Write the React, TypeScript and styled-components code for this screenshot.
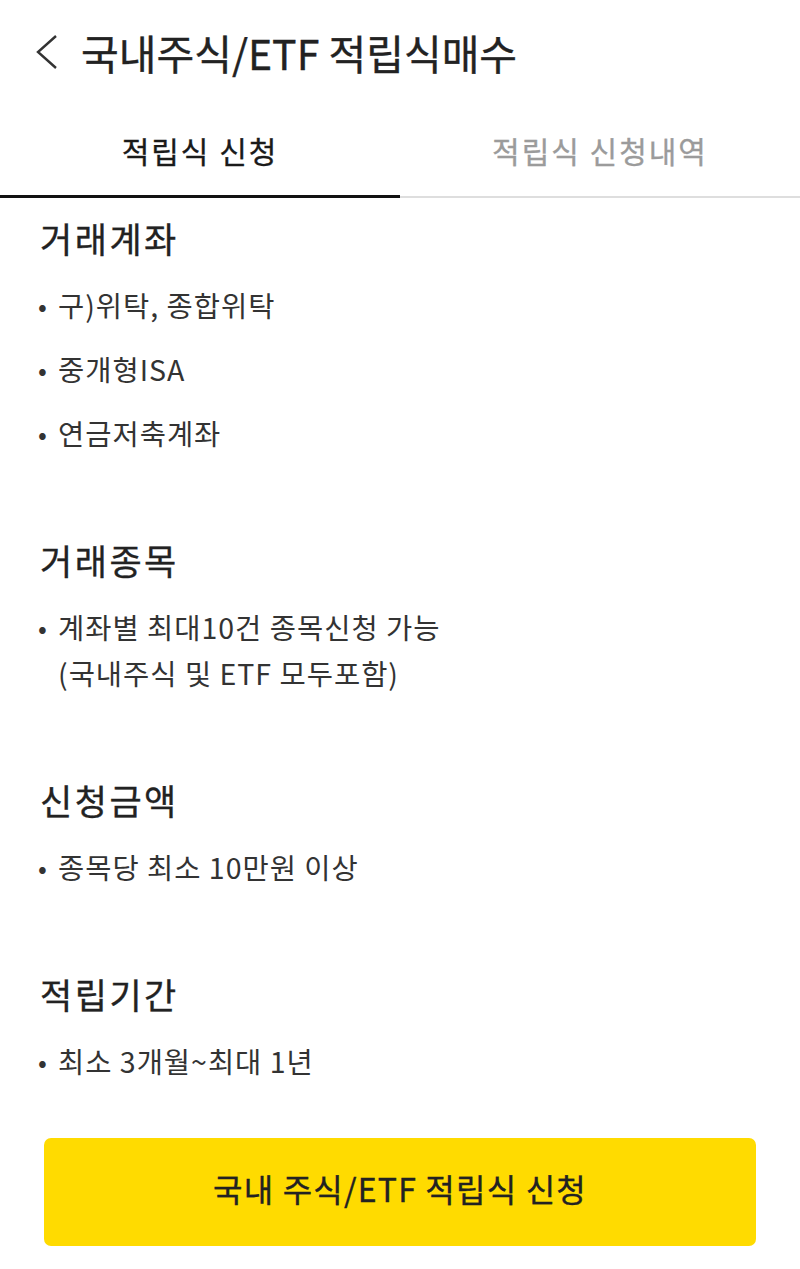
import styled, { createGlobalStyle } from "styled-components"
import { useState } from "react"

const GlobalStyle = createGlobalStyle`
  html, body {
    margin: 0;
    padding: 0;
    background: #fff;
  }
  body {
    font-family: "Noto Sans CJK KR", "Noto Sans", sans-serif;
    color: #222;
    -webkit-font-smoothing: antialiased;
  }
  * { box-sizing: border-box; }
`

const sections = [
  { title: "거래계좌", items: ["구)위탁, 종합위탁", "중개형ISA", "연금저축계좌"] },
  { title: "거래종목", items: ["계좌별 최대10건 종목신청 가능\n(국내주식 및 ETF 모두포함)"] },
  { title: "신청금액", items: ["종목당 최소 10만원 이상"] },
  { title: "적립기간", items: ["최소 3개월~최대 1년"] },
]

const tabs = ["적립식 신청", "적립식 신청내역"]

const App = () => {
  const [active, setActive] = useState(0)

  return (
    <Page>
      <GlobalStyle />
      <Header>
        <BackButton aria-label="back">
          <svg width="24" height="36" viewBox="0 0 24 36" fill="none">
            <polyline points="21,2 3,18 21,34" stroke="#333" strokeWidth="2.4" />
          </svg>
        </BackButton>
        <Title>국내주식/ETF 적립식매수</Title>
      </Header>

      <TabBar>
        {tabs.map((t, i) => (
          <Tab key={t} $active={i === active} onClick={() => setActive(i)}>
            {t}
          </Tab>
        ))}
      </TabBar>

      <Content>
        {sections.map((s) => (
          <Section key={s.title}>
            <SectionTitle>{s.title}</SectionTitle>
            <List>
              {s.items.map((item) => (
                <Item key={item}>
                  <Dot>•</Dot>
                  <ItemText>{item}</ItemText>
                </Item>
              ))}
            </List>
          </Section>
        ))}
      </Content>

      <Footer>
        <ApplyButton>국내 주식/ETF 적립식 신청</ApplyButton>
      </Footer>
    </Page>
  )
}

export default App

// medium weight: only regular/bold are installed, so thicken regular a bit
const medium = `
  font-weight: 400;
  -webkit-text-stroke: 0.35px currentColor;
`

const Page = styled.div`
  width: 800px;
  min-height: 1269px;
  display: flex;
  flex-direction: column;
  background: #fff;
`

const Header = styled.header`
  height: 104px;
  display: flex;
  align-items: center;
  padding-left: 35px;
  gap: 22px;
`

const BackButton = styled.button`
  display: flex;
  align-items: center;
  padding: 0;
  border: none;
  background: transparent;
  cursor: pointer;
`

const Title = styled.h1`
  margin: 0;
  font-size: 41px;
  ${medium}
  color: #222;
  letter-spacing: 0;
  line-height: 1;
`

const TabBar = styled.nav`
  display: flex;
  height: 94px;
`

const Tab = styled.button<{ $active: boolean }>`
  flex: 1;
  display: flex;
  align-items: center;
  justify-content: center;
  padding: 0 0 ${(p) => (p.$active ? "0" : "1px")};
  border: none;
  background: transparent;
  border-bottom: ${(p) => (p.$active ? "3px solid #111" : "2px solid #dedede")};
  font-family: inherit;
  font-size: 30px;
  letter-spacing: 2px;
  ${medium}
  color: ${(p) => (p.$active ? "#1a1a1a" : "#9b9b9b")};
  cursor: pointer;
`

const Content = styled.main`
  display: flex;
  flex-direction: column;
  gap: 80px;
  padding: 16px 40px 0;
`

const Section = styled.section`
  display: flex;
  flex-direction: column;
  gap: 20px;
`

const SectionTitle = styled.h2`
  margin: 0;
  font-size: 35px;
  line-height: 48px;
  letter-spacing: 2.5px;
  ${medium}
  color: #222;
`

const List = styled.ul`
  list-style: none;
  margin: 0;
  padding: 0;
  display: flex;
  flex-direction: column;
  gap: 18px;
`

const Item = styled.li`
  display: flex;
  font-size: 28.5px;
  line-height: 46px;
  letter-spacing: 1px;
  color: #333;
`

const Dot = styled.span`
  width: 18px;
  flex-shrink: 0;
  font-size: 26px;
  margin-left: -2px;
  margin-right: 2px;
  color: #333;
`

const ItemText = styled.span`
  white-space: pre-line;
`

const Footer = styled.footer`
  padding: 54px 44px 23px;
`

const ApplyButton = styled.button`
  width: 100%;
  height: 108px;
  padding: 0 0 8px;
  border: none;
  border-radius: 7px;
  background: #ffdb00;
  font-family: inherit;
  font-size: 32px;
  letter-spacing: 1.2px;
  ${medium}
  color: #222;
  cursor: pointer;
`
